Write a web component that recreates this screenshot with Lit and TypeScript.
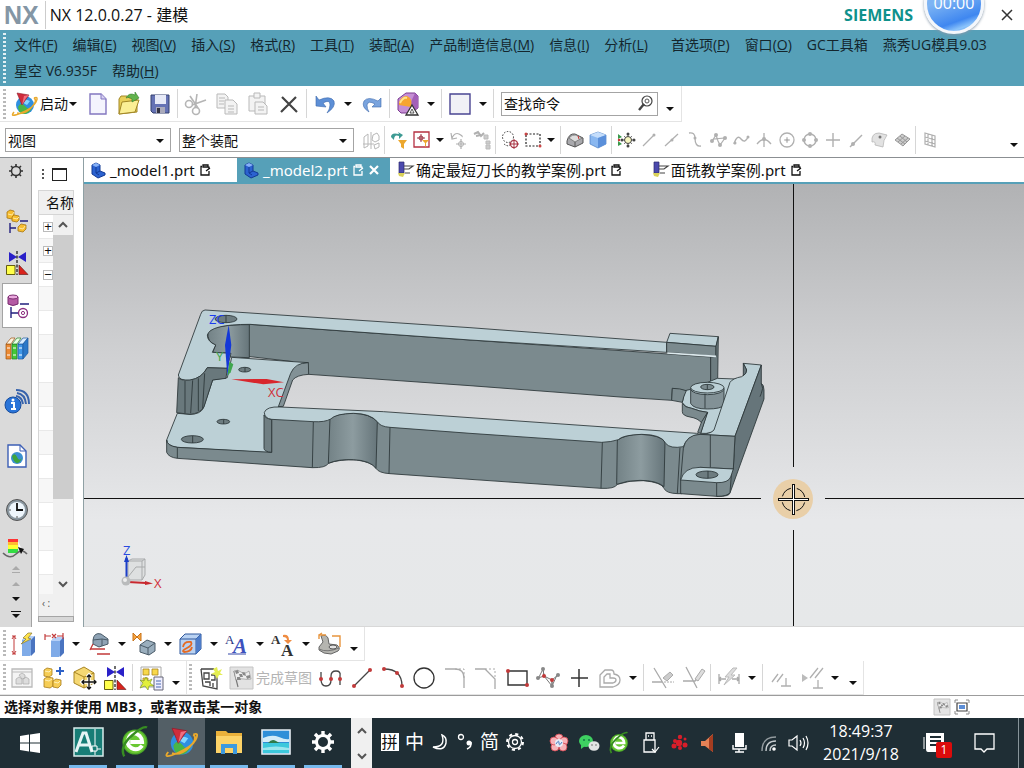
import { LitElement, html, svg, css, TemplateResult, SVGTemplateResult } from "lit";
import { customElement, state } from "lit/decorators.js";
import { classMap } from "lit/directives/class-map.js";

/* Every icon is drawn around (0, 0) in a 24 x 24 box. */
const G = "#b0b0b0";
const dot = (x: number, y: number, c = "#c23a3a", r = 2) => svg`<circle cx=${x} cy=${y} r=${r} fill=${c} />`;
const flash = svg`<path d="M6-11 1-6 4-5-1 0 9-5 6-6 10-11z" fill="#ffe34a" stroke="#8a7a30" stroke-width=".7"/>`;
const blueCube = svg`<path d="M0-4 4-8H13L12-7V8L8 12H0z" fill="#7fabe8"/><path d="M0-4 4-8H13L9-4z" fill="#b5d0f7"/><path d="M9-4 13-8V8L9 12z" fill="#4a74c0"/>`;
const mirror = svg`<path d="M-8-11V-1L0-6zM9-11V-1L1-6z" fill="#2a20c8"/><path d="M0-12V12" stroke="#222" stroke-width="1.3" stroke-dasharray="3 1.5"/><path d="M-10.500 2.500H-2V11.500H-10.500z" fill="#ffff4a" stroke="#665f10"/><path d="M2 2 11 11.500H2z" fill="#d9231c" stroke="#5a1010" stroke-width=".6"/>`;
const globe = svg`<circle cx="0" cy="1" r="9" fill="#2f8fe0"/><path d="M-7 3Q-4-3 0 2T7 4Q4 10-1 10T-7 3z" fill="#48b548"/><path d="M-5-3Q0-6 5-3L2 1Q-2-1-5-3z" fill="#83d6ff"/><path d="M-8-11 4-9-3 1z" fill="#cf2c3c" stroke="#901c2c" stroke-width=".6"/><path d="M4-9 1-6-3 1-1-8z" fill="#f07080"/><path d="M9-6Q13-3 6 4T-8 9M9-6Q14-8 11-2T-4 9-11 8" fill="none" stroke="#e9a92c" stroke-width="1.500"/>`;
const flag = svg`<path d="M-7-7-3 9" stroke="#777" stroke-width="1.2"/><path d="M-7-7Q-3-9 0-6T8-7L10 1Q6 2 3 1T-5 2z" fill="#eee" stroke="#888" stroke-width=".6"/><path d="M-6-7-3-8-2-5-5-4zM1-6 4-5.500 5-2 2-3zM-2-4 1-4 2-1-1-1zM5-2 9-3 9 0 6 1zM-4-1-1-1 0 2-4 2z" fill="#888"/>`;
const page = svg`<path d="M-8-10H3L8-5V10H-8z" fill="#f4f4fd" stroke="#8377c0" stroke-width="1.4"/><path d="M3-10V-5H8" fill="#d8d2f2" stroke="#8377c0"/>`;
const twoLines = svg`<path d="M-9 4-3-4M-4 4 2-4" stroke=${G} stroke-width="1.3"/>`;
const ball = svg`<circle r="10.500" fill="#4aa52a"/><circle r="9.500" fill="#69c832"/><path d="M6 3Q2 8-3 5T-5-4 4-5Q6-3 6 0H-4" fill="none" stroke="#fff" stroke-width="3.200"/><path d="M-9 12Q-13 4-3-5T10-12" fill="none" stroke="#378d22" stroke-width="2"/>`;

const icons: Record<string, SVGTemplateResult> = {
  globe,
  page,
  open: svg`<path d="M-10-5-8-8H-2L0-6H8V8L-10 10z" fill="#e8cf58" stroke="#a28726"/><path d="M-7-2 10-4 6 8-10 10z" fill="#fbef95" stroke="#a28726"/><path d="M-3-6Q0-12 6-9V-12L10-6 3-2V-5Q0-8-3-6z" fill="#62b34c" stroke="#34802c" stroke-width=".6"/>`,
  save: svg`<path d="M-9-9H9V9H-7L-9 7z" fill="#6572b4" stroke="#35406e"/><path d="M-5-9H6V0H-5z" fill="#e7eaf7"/><path d="M-4 3H5V9H-4z" fill="#aab"/><path d="M-3 4H0V9H-3z" fill="#334"/>`,
  cut: svg`<g fill="none" stroke="#b5b5b5" stroke-width="1.600"><circle cx="-7" cy="0" r="3.500"/><circle cx="0" cy="7" r="3.500"/><path d="M-4 1 10-4M-1 4 1-10M2 4-6-8"/></g>`,
  copy: svg`<g fill="#f3f3f3" stroke="#b9b9b9"><path d="M-10-10H-2L1-7V4H-10z"/><path d="M-2-4H6L10 0V10H-2z"/><path d="M-8-6H-2M-8-3H-3M-8 0H-3M1 2H7M1 5H7M1 8H7"/></g>`,
  paste: svg`<g fill="#f3f3f3" stroke="#b9b9b9"><path d="M-9-8H7V7H-9z"/><path d="M-4-11H2V-6H-4z"/><path d="M-3-2H5L9 2V10H-3z"/><path d="M0 3H6M0 6H6"/></g>`,
  del: svg`<path d="M-7-7 8 8M7-7-8 8" stroke="#444" stroke-width="2.200"/>`,
  undo: svg`<path d="M-9-8-9 2 1 3-2-1Q5-5 5 1 5 5 2 9 11 3 9-3 5-9-6-4z" fill="#5d8fd6" stroke="#3e69ad" stroke-width=".6"/>`,
  redo: svg`<path d="M9-6V3L0 3 3 0Q-4-4-5 1-5 5-3 8-11 3-8-3-4-8 6-3z" fill="#7aa4de" stroke="#3e69ad" stroke-width=".6"/>`,
  cubes: svg`<path d="M-10-5-2-11H7L10-8V4L3 9H-7L-10 6z" fill="#c58fd4" stroke="#7b3b90"/><path d="M7-11 10-8V4L3 9V-2z" fill="#a35fb8"/><path d="M-9-2Q-6-9-1-8 5-6 3 3L-9 1z" fill="#f6a531"/><path d="M-8-1Q-5-7-1-6" stroke="#ffe28a" stroke-width="2" fill="none"/><path d="M4 1 10 11H-2z" fill="#fff" stroke="#333" stroke-width="1.300"/><path d="M4 5 6 9H2z" fill="none" stroke="#333" stroke-width=".8"/>`,
  square: svg`<path d="M-10-10H10V10H-10z" fill="#f1f1f6" stroke="#4a4592" stroke-width="1.400"/>`,
  lens: svg`<circle cx="2" cy="-3" r="5" fill="#fff" stroke="#444" stroke-width="1.200"/><circle cx="2" cy="-3" r="2" fill="none" stroke="#555"/><path d="M-1 0-6 6" stroke="#444" stroke-width="2.400"/>`,
  asm: svg`<g fill="none" stroke="#b8b8b8"><path d="M-7-3-3-6V6L-7 8zM0-8V9M-8 4H3M2-5 6-7 8-4V0L4 2 1 0zM3 5 8 3V7L4 9z"/></g>`,
  filterBack: svg`<path d="M-8-3Q-8-8 0-6L-1-8 4-5 0-1V-4Q-5-6-5 0z" fill="#3d9a93"/><path d="M-1 0H8L5 4V9L2 7V4z" fill="#eca72d"/>`,
  filterBox: svg`<path d="M-8-8H7V7H-8z" fill="#fff" stroke="#b53042" stroke-width="1.300"/><path d="M-1-6V2M-5-2H3" stroke="#9c3345"/><circle cx="-1" cy="-2" r="2" fill="none" stroke="#9c3345"/><path d="M0 0H7L4 3V7L3 6V3z" fill="#eca72d"/>`,
  gUndo: svg`<path d="M-8-7-7-1-2-2M-7-2Q-4-8 0-6T3-3M2-1V9M-3 4H7" fill="none" stroke=${G} stroke-width="1.200"/><circle cx="2" cy="4" r="2.500" fill="none" stroke=${G}/>`,
  gTree: svg`<path d="M-8-6-4-8-1-4 2-7M-6-4-1-5" fill="none" stroke=${G} stroke-width="2"/><path d="M2-5H6V-1H2zM4 1H8V4H4zM4 5H8V9H4z" fill="#ccc" stroke="#bbb"/>`,
  dashedSel: svg`<circle cx="-2" cy="-3" r="5.500" fill="none" stroke="#333" stroke-dasharray="1.500 1.500"/><path d="M-6 4Q-1 8 2 3" fill="none" stroke="#333" stroke-dasharray="1.500 1.500"/><circle cx="4" cy="4" r="3.500" fill="#fff" stroke="#a73342" stroke-width="1.200"/><path d="M4-1V9M-1 4H9" stroke="#a73342"/>`,
  dashedBox: svg`<path d="M-7-6H7V6H-7z" fill="none" stroke="#222" stroke-width="1.200" stroke-dasharray="2 1.500"/>${dot(-7, -6, "#c44", 1.5)}${dot(7, 6, "#c44", 1.5)}`,
  greyCube: svg`<path d="M-8 1Q-6-7 0-6L8-2V3L0 7-8 4z" fill="#a9a9ad" stroke="#555"/><path d="M-6-2Q-3-6 1-5L7-2 0 2z" fill="#ddd" stroke="#666" stroke-width=".7"/><path d="M0 2V7" stroke="#555"/><path d="M3-4 4-1" stroke="#c33"/>`,
  cube: svg`<path d="M-8-5 0-8 8-5V4L0 8-8 4z" fill="#89b7f0" stroke="#4a7cc0" stroke-width=".7"/><path d="M-8-5 0-8 8-5 0-2z" fill="#c4ddfb"/><path d="M0-2 8-5V4L0 8z" fill="#5a8fda"/>`,
  scatter: svg`<path d="M-8-6-4-3-8-1zM-8 1-4 4-8 6z" fill="#3a9a4c"/><path d="M2-7V7M-5 0H9M-2-4 6 4M6-4-2 4" stroke="#555" stroke-width=".8"/><circle cx="2" cy="0" r="3.500" fill="#f6f6c0" stroke="#444"/>${dot(-7, 0, "#c33", 1.2)}${dot(2, -6, "#444", 1.5)}${dot(2, 6, "#444", 1.5)}${dot(8, 0, "#444", 1.5)}${dot(-4, 0, "#444", 1.5)}`,
  line1: svg`<path d="M-6 6 5-5" stroke=${G} stroke-width="1.300"/>${dot(5, -5, G, 1.5)}`,
  line2: svg`<path d="M-7 6 6-6" stroke=${G} stroke-width="1.300"/>${dot(0, 0, G, 1.5)}`,
  curveS: svg`<path d="M-6-7Q0-8 0-2 0 7 6 6" fill="none" stroke=${G} stroke-width="1.300"/>${dot(0, -2, G, 1.5)}`,
  poly: svg`<path d="M-7 1-4-1M-6 1-2-5 0 1 2 5 7-2-4-1" fill="none" stroke=${G} stroke-width="1.200"/>${dot(-6, 1, G)}${dot(-2, -5, G)}${dot(2, 5, G)}${dot(7, -2, G)}`,
  wave: svg`<path d="M-7 4Q-4-6 0-1T7-3" fill="none" stroke=${G} stroke-width="1.400"/>${dot(-6, 3, G, 1.5)}${dot(7, -3, G, 1.5)}`,
  arcPlus: svg`<path d="M-7 4Q0-5 7 4M0-7V7" fill="none" stroke=${G} stroke-width="1.300"/>${dot(0, -1, G)}`,
  target: svg`<circle r="7" fill="none" stroke=${G} stroke-width="1.300"/><path d="M-3 0H3M0-3V3" stroke=${G}/>${dot(0, 0, G, 1.5)}`,
  ring: svg`<circle r="6" fill="none" stroke=${G} stroke-width="1.400"/>${dot(0, -6, G)}${dot(0, 6, G)}${dot(-6, 0, G)}${dot(6, 0, G)}`,
  plusG: svg`<path d="M-7 0H7M0-7V7" stroke=${G} stroke-width="1.400"/>`,
  line3: svg`<path d="M-6 7 6-5" stroke=${G} stroke-width="1.400"/>${dot(-3, 4, G)}`,
  face: svg`<path d="M-7 2Q-8-7 0-7L8-5Q4 0 4 7L-4 5Q-3 1-7 2z" fill="#e2e2e2" stroke="#b5b5b5" stroke-width=".8"/>${dot(1, -3, "#777", 1.5)}`,
  mesh: svg`<path d="M-7 0 0-6 8-1 1 6z" fill="#ccc" stroke="#999"/><path d="M-5-2 3 4M-2-4 5 2M-4 2 3-4M-1 4 6-2" stroke="#999"/>`,
  gridG: svg`<path d="M-5-7 5-4V7L-5 4zM-5-3 5 0M-5 1 5 4M-2-6V5M2-5V6" fill="none" stroke=${G} stroke-width="1.200"/>`,
  /* resource bar */
  gear: svg`<circle r="4.500" fill="none" stroke="#333" stroke-width="1.500"/><path d="M0-7V-4M0 4V7M-7 0H-4M4 0H7M-5-5-3-3M5-5 3-3M-5 5-3 3M5 5 3 3" stroke="#333" stroke-width="1.600"/>`,
  nav: svg`<g fill="#f7bd2f" stroke="#a87713" stroke-width=".8"><path d="M-10-10-7-12-3-11V-6L-5-3-10-4z"/><path d="M-5-5-3-7 2-6V-2L0 0-5-1z"/><path d="M1 5 4 2 9 3V7L6 10 1 9z"/></g><path d="M-9-8-5-7-3-10M-4-4 0-3 2-5M2 6 6 7 8 4" fill="none" stroke="#ffe9a0"/><path d="M3-1H11M-7 1V11M-7 6H-1" stroke="#22207e" stroke-width="1.400"/>`,
  mirror,
  feature: svg`<path d="M-10-9H0V-2Q-5 1-10-2z" fill="#b45aa4" stroke="#7a2d70"/><ellipse cx="-5" cy="-9" rx="5" ry="2" fill="#eaa9de" stroke="#7a2d70"/><path d="M2-2H11M-7 1V12M-7 7H0" stroke="#22207e" stroke-width="1.400"/><circle cx="5" cy="7" r="4.500" fill="#fff" stroke="#8c2f80" stroke-width="1.300"/><circle cx="5" cy="7" r="1.600" fill="none" stroke="#8c2f80"/>`,
  books: svg`<g stroke-width=".7"><path d="M-11-5H-6V10H-11z" fill="#ec8a34" stroke="#9c5312"/><path d="M-11-5-6-11H-2L-6-5z" fill="#fff3df" stroke="#9c5312"/><path d="M-5-5H0V10H-5z" fill="#44c838" stroke="#24802a"/><path d="M-5-5 0-11H4L0-5z" fill="#e9ffe4" stroke="#24802a"/><path d="M1-5H6V10H1z" fill="#3f97e8" stroke="#1c5aa0"/><path d="M1-5 6-11H11L6-5z" fill="#d8ecff" stroke="#1c5aa0"/><path d="M6-5 11-11V4L6 10z" fill="#2b78c8" stroke="#1c5aa0"/></g><path d="M-10-1H-7M-4-1H-1M2-1H5M2 6H5M-10 6H-7M-4 6H-1" stroke="#fff" stroke-width="1.200"/>`,
  info: svg`<g fill="none" stroke="#3763ac" stroke-width="2"><path d="M-1-6Q5-5 6 2M0-9Q8-8 9 2M-1-12Q12-12 12 2" /></g><circle cx="-4" cy="3" r="8" fill="#2a74d8" stroke="#174c9c"/><path d="M-6 1H-3V7M-6 7H-1" stroke="#fff" stroke-width="2" fill="none"/>${dot(-4, -2, "#fff", 1.5)}`,
  web: svg`<path d="M-9-11H3L9-5V11H-9z" fill="#fff" stroke="#3d5fb5" stroke-width="1.400"/><path d="M3-11V-5H9" fill="none" stroke="#3d5fb5"/><circle cx="0" cy="2" r="6" fill="#3a8fd0"/><path d="M-5 0Q-2-4 0 1T5 2Q3 7 0 7T-5 0z" fill="#3da53d"/>`,
  clock: svg`<circle r="10.500" fill="#8a97a0" stroke="#555"/><circle r="8" fill="#eef6fc"/><path d="M0-7V0H6" stroke="#111" stroke-width="1.800" fill="none"/><path d="M0 6V8M-8 0H-6" stroke="#555"/>`,
  rainbow: svg`<path d="M-9-10H1V-7H-9z" fill="#f33"/><path d="M-9-7H1V-4H-9z" fill="#fb3"/><path d="M-9-4H1V0H-9z" fill="#ff3"/><path d="M-9 0H1V4H-9z" fill="#3d4"/><path d="M-14 4Q-7 11-1 5T10 5" fill="none" stroke="#666" stroke-width="1.600"/><path d="M1-8 6 3 2 1z" fill="#fff"/><path d="M1-2 7 0 4 5z" fill="#111"/>`,
  /* feature tools */
  f1: svg`${blueCube}${flash}<path d="M-8-8V10M-10-8H-6M-10 10H-6M-10-5-8-8-6-5M-10 7-8 10-6 7" stroke="#c23a3a" fill="none"/>`,
  f2: svg`<g transform="translate(-2 1)">${blueCube}<path d="M-6-11V-5M12-12V-6M-6-9H0M6-9H12M1-11 5-7M5-11 1-7" stroke="#c23a3a" stroke-width="1.200"/></g>`,
  f3: svg`<path d="M-6-4Q-5-12 2-10L9-5V0L0 3-6 0z" fill="#8fa3b5" stroke="#4a5b68"/><path d="M-6-4 3-5 9-4M3-5V2" stroke="#4a5b68" fill="none"/><path d="M-6 0-9 6M-9 5H6M-2 10H11" stroke="#c23a3a" stroke-width="1.300"/>`,
  f4: svg`<path d="M-12-11V-3L-4-11V-3z" fill="#f6a543" stroke="#c87218"/><path d="M-5 1 2-4 10-1V7L4 11-5 8z" fill="#9aaebd" stroke="#4a5b68"/><path d="M-5 1 3 4 10-1M3 4V11" fill="none" stroke="#4a5b68"/>`,
  f5: svg`<path d="M-11-5-6-10H10V5L5 10H-11z" fill="#b9d2f2" stroke="#31589c"/><path d="M-11-5H5L10-10M5-5V10" fill="none" stroke="#31589c"/><path d="M5-5 10-10V5L5 10z" fill="#4d7cc8"/><path d="M-8 3Q-7-3 0-2 2 1-4 4T-7 8Q0 8 1 3" fill="none" stroke="#e56a22" stroke-width="1.800"/>`,
  f6: svg`<path d="M-9 10H9" stroke="#3346a8"/><text class="serif" x="-12" y="0" font-size="13" fill="#24307e">A</text><text class="serif it" x="-4" y="9" font-size="21" font-weight="700" fill="#3c51bd">A</text>`,
  f7: svg`<text class="serif" x="-12" y="0" font-size="13" font-weight="700" fill="#333">A</text><text class="serif" x="-2" y="12" font-size="17" font-weight="700" fill="#333">A</text><path d="M0-9Q6-10 6-4H9L5 0 1-4H4Q4-7 0-7z" fill="#ef8c42"/>`,
  f8: svg`<path d="M-10 3-6-2-8-8Q-3-10-1-6L0 0 8 1Q12 4 9 7L2 10Q-6 10-10 6z" fill="#b5b5b0" stroke="#666"/><path d="M-10 5Q-2 9 10 4" fill="none" stroke="#777"/><ellipse cx="4" cy="3" rx="4" ry="2" fill="#e4e4e4" stroke="#555"/><path d="M-10-5V-9H-3M3-8H11V3M-10-9-7-11" stroke="#e8953e" fill="none" stroke-width="1.400"/>`,
  g1: svg`<path d="M-10-9H10V9H-10z" fill="#f4f4f4" stroke="#bbb" stroke-width="1.300"/><path d="M-10-6H10" stroke="#bbb"/><path d="M-6 1-3-1 0 1V6H-6zM1 1 4-1 7 1V6H1zM-3-3 0-5 3-3V0L0 1z" fill="#ddd" stroke="#aaa" stroke-width=".7"/>`,
  g2: svg`<path d="M7-11V-3M3-7H11" stroke="#2e62c8" stroke-width="2"/><g fill="#f6cd55" stroke="#a87c1a" stroke-width=".8"><path d="M-9-8-6-10-1-9V-3L-4-1-9-2z"/><path d="M-9 1-6-1 0 0V8L-3 10-9 9z"/><path d="M0 3 3 1 8 2V7L5 10 0 9z"/></g><path d="M-8-7-4-6-2-8M-8 2-4 3-1 1M1 4 5 5 7 3" stroke="#fff0b8" fill="none"/>`,
  g3: svg`<path d="M-10-6 0-11 10-5V5L0 10-10 5z" fill="#f5d873" stroke="#a88522"/><path d="M-10-6 0-1 10-5M0-1V10" stroke="#a88522" fill="none"/><path d="M5-3V11M-2 4H12M3-1 5-3 7-1M3 9 5 11 7 9M0 2-2 4 0 6M10 2 12 4 10 6" stroke="#fff" stroke-width="3.500" fill="none"/><path d="M5-3V11M-2 4H12M3-1 5-3 7-1M3 9 5 11 7 9M0 2-2 4 0 6M10 2 12 4 10 6" stroke="#111" stroke-width="1.300" fill="none"/>`,
  g5: svg`<path d="M-10-11H10V9H-10z" fill="#fff" stroke="#aaa"/><path d="M-8-9H-2V-3H-8zM1-9H7V-3H1zM-8 0H-3V5H-8z" fill="#f8d84a" stroke="#a88522" stroke-width=".8"/><path d="M-5-1-3 3 1 1-1 5 3 8-2 8-3 12-6 8-11 10-8 5-11 2-7 3z" fill="#e2ef3a" stroke="#6d8a20" stroke-width=".6"/><path d="M3-1H12V12H3z" fill="#eef" stroke="#667"/><path d="M5 3H10M5 6H10M5 9H10" stroke="#4a68b0"/>`,
  sketch: svg`<path d="M-9-9H4M-9-9-7 8 7 11V-1M-6-5H-1V1H-6zM1-3H5V2H1M-5 4H0V8M3 5V9" fill="none" stroke="#444" stroke-width="1.300"/><path d="M7-11 8-7 12-9 10-5 13-3 9-3 7 1 5-3 1-4 5-6 3-9z" fill="#e4ee52"/>`,
  finish: svg`<path d="M-11-11H12V11H-11z" fill="#e2e2e2" stroke="#c4c4c4"/>${flag}`,
  profile: svg`<path d="M-10-6V1Q-10 8-5 8T0 2V-2Q0-7 5-7T9-2V7" fill="none" stroke="#444" stroke-width="1.300"/>${dot(-10, 1)}${dot(0, 1)}${dot(9, 1)}`,
  segment: svg`<path d="M-8 8 8-8" stroke="#444" stroke-width="1.300"/>${dot(-8, 8)}${dot(8, -8)}`,
  arc: svg`<path d="M-9-9Q9-9 9 8" fill="none" stroke="#444" stroke-width="1.300"/>${dot(-9, -9)}${dot(4, -5)}${dot(9, 8)}`,
  circle: svg`<circle r="10" fill="none" stroke="#333" stroke-width="1.300"/>`,
  fillet: svg`<path d="M-10-9H0Q9-9 9 0V10" fill="none" stroke="#aaa" stroke-width="1.300"/><path d="M0-9H9V0" fill="none" stroke="#aaa" stroke-dasharray="2"/>`,
  chamfer: svg`<path d="M-11-9H-1L9 1V11" fill="none" stroke="#aaa" stroke-width="1.300"/><path d="M-1-9H9V1" fill="none" stroke="#aaa" stroke-dasharray="2"/>`,
  rect: svg`<path d="M-9-7H10V7H-9z" fill="none" stroke="#333" stroke-width="1.400"/>${dot(-9, -7)}${dot(10, 7)}`,
  spline: svg`<path d="M-10 0-4-2-5-9-4-2 4 2 4 8 4 2 10-3M-9-1-5-9M-4-2 4 8M4 8 9-3" fill="none" stroke="#777"/>${dot(-10, 0, "#888")}${dot(-5, -9, "#888")}${dot(4, 8, "#888")}${dot(10, -3, "#888")}${dot(-4, -2)}${dot(4, 2)}`,
  plus: svg`<path d="M-8 0H9M0-9V9" stroke="#333" stroke-width="1.500"/>`,
  offset: svg`<g fill="none" stroke="#aaa" stroke-width="1.300"><path d="M-10 9V-3L-5-8H1Q4-8 4-4 10-3 10 2T3 9z"/><path d="M-6 5V-1L-3-4H0V0H3Q6 0 6 2T3 5z"/></g>`,
  trim: svg`<path d="M-8-10 4 10M-10 4H0" stroke="#aaa" stroke-width="1.300"/><path d="M2 4H12" stroke="#aaa" stroke-dasharray="2 1"/><path d="M1 0 8-6 11-3 5 3z" fill="#ccc" stroke="#aaa"/>`,
  extend: svg`<path d="M-7-11 4 10M-10 3H2L6-1" fill="none" stroke="#aaa" stroke-width="1.300"/><path d="M2 1 9-9 12-7 5 3z" fill="#ddd" stroke="#aaa"/>`,
  dim: svg`<path d="M-10-4V6M10-4V6M-10 1H-3M3 1H10M-8-1-10 1-8 3M8-1 10 1 8 3" fill="none" stroke="#aaa" stroke-width="1.300"/><path d="M4-10-4-1H0L-5 7 6-3H2L8-10z" fill="#ddd" stroke="#bbb"/>`,
  para: svg`${twoLines}<path d="M0 8H10M5 0V8" stroke=${G} stroke-width="1.300"/>`,
  paraShow: svg`<path d="M-10-4-4 0-10 4z" fill="#bbb"/><path d="M-2 0 6-10M3 0 11-10M1 10H11M6 2V10" stroke=${G} stroke-width="1.300"/>`,
  flagBox: svg`<path d="M-8-8H8V8H-8z" fill="#e4e4e4" stroke="#c4c4c4"/><g transform="scale(.65)">${flag}</g>`,
  screen: svg`<path d="M-7-4V-7H-4M4-7H7V-4M7 4V7H4M-4 7H-7V4" stroke="#888" fill="none"/><path d="M-5-4H5V4H-5z" fill="#fff" stroke="#444" stroke-width="1.200"/><path d="M-3-2H3V2H-3z" fill="#5b8dd6"/>`,
  /* document tabs */
  part: svg`<path d="M-6-5-2-7 2-5V1L7 3V5L0 8-6 4z" fill="#2b62d0" stroke="#123a94"/><path d="M-6-5-2-7 2-5-2-3z" fill="#86b1f7"/><path d="M-2-3V3L1 5M2 1-2 3" stroke="#123a94" fill="none"/>`,
  drill: svg`<path d="M-5-8H0V3H-5z" fill="#4b49ad" stroke="#2b2a6e" stroke-width=".7"/><path d="M-6 3H1L-1 7-5 6z" fill="#d8d05a"/><path d="M0-4H9L5-1H0M1 3H6" stroke="#444" stroke-width="1.200" fill="none"/>`,
  mark: svg`<path d="M-2-5V-3H3V-5zM-3-3.500H-4V5H4V1M4-3.500V-1M1 1 5-2" fill="none" stroke="currentColor" stroke-width="1.300"/>`,
  close: svg`<path d="M-3-4 5 4M5-4-3 4" stroke="currentColor" stroke-width="2.200"/>`,
  winClose: svg`<path d="M-5-5 5 5M5-5-5 5" stroke="#333" stroke-width="1.500"/>`,
  /* taskbar */
  windows: svg`<path d="M-10-7-1-8.500V-.500H-10zM0-8.600 10-10V-.500H0zM-10 .500H-1V8.500L-10 7zM0 .500H10V10L0 8.600z" fill="#fff"/>`,
  cad: svg`<path d="M-14-14H15V14H-14z" fill="#177d76" stroke="#d9ecec" stroke-width="1.500"/><path d="M-12 10-5-9H-2L4 10M-9 3H3" stroke="#e5f4f4" stroke-width="3" fill="none"/><path d="M7-13V4M4 4H9V9H4zM9 7H13M7 9V13" stroke="#fff" fill="none"/>`,
  bigBall: svg`<g transform="scale(1.200)">${ball}</g>`,
  smallBall: svg`<g transform="scale(.850)">${ball}</g>`,
  nx: svg`<g transform="scale(1.250)">${globe}</g>`,
  folder: svg`<path d="M-13-11H-3L-1-9H13V11H-13z" fill="#eab13b"/><path d="M-13-6H13V11H-13z" fill="#fcd368"/><path d="M-8 12V2H8V12H4V6H-4V12z" fill="#3c9ae0"/>`,
  picture: svg`<path d="M-14-12H14V12H-14z" fill="#2f8fd8" stroke="#e6eef4" stroke-width="1.600"/><path d="M-13-4Q-4-8 3-5T13-3V0H-13z" fill="#d3ecf8"/><path d="M-8 1Q-4-4 0-1T8 1z" fill="#2f7a4a"/><path d="M-13 1H13V11H-13z" fill="#3cc8dc"/><path d="M-13 6Q0 3 13 6V8H-13z" fill="#9be6ee"/>`,
  settings: svg`<circle r="6.500" fill="none" stroke="#fff" stroke-width="3"/><path d="M0-11V-7M0 7V11M-11 0H-7M7 0H11M-8-8-5-5M8-8 5-5M-8 8-5 5M8 8 5 5" stroke="#fff" stroke-width="3.400"/>`,
  moon: svg`<path d="M2-7Q6 5-7 5 4 10 6 1 7-5 2-7z" fill="none" stroke="#fff" stroke-width="1.400"/>`,
  punct: svg`<circle cx="-4" cy="-5" r="2.500" fill="none" stroke="#fff" stroke-width="1.300"/><circle cx="4" cy="1" r="2.500" fill="#fff"/><path d="M6 0Q7 5 2 7" stroke="#fff" stroke-width="1.500" fill="none"/>`,
  imeGear: svg`<circle r="6.500" fill="none" stroke="#fff" stroke-width="1.300"/><circle r="2.500" fill="none" stroke="#fff" stroke-width="1.300"/><circle r="8" fill="none" stroke="#fff" stroke-width="2" stroke-dasharray="3.140 3.140"/>`,
  flower: svg`<g fill="#f6b3b8" stroke="#d4434e" stroke-width=".8"><circle cx="0" cy="-5" r="4"/><circle cx="5" cy="-2" r="4"/><circle cx="4" cy="4" r="4"/><circle cx="-4" cy="4" r="4"/><circle cx="-5" cy="-2" r="4"/></g><circle r="4" fill="#e9edf6"/><path d="M-3 1Q0-4 0 0T3-1" stroke="#4a7cc0" fill="none"/>`,
  wechat: svg`<ellipse cx="-3" cy="-2" rx="7" ry="6" fill="#3ed061"/><path d="M-8 2-8 6-4 3z" fill="#3ed061"/><ellipse cx="5" cy="3" rx="5.500" ry="4.800" fill="#e2e4e4"/>${dot(-5, -3, "#174", 1)}${dot(0, -3, "#174", 1)}${dot(3, 2, "#666", 0.8)}${dot(7, 2, "#666", 0.8)}`,
  usb: svg`<path d="M-3-3V-10H5V-3M-5-3H6V9H-5z" fill="none" stroke="#fff" stroke-width="1.300"/><path d="M-1-7H0M2-7H3" stroke="#fff" stroke-width="1.500"/><path d="M3 6 6 9 10 4" fill="none" stroke="#fff" stroke-width="1.200"/>`,
  redDots: svg`${dot(0, 0, "#d81e2a", 3.2)}${dot(-5, 3, "#d81e2a", 2.5)}${dot(6, 2, "#d81e2a", 2.5)}${dot(1, -6, "#d81e2a", 2.2)}${dot(-4, -2, "#d81e2a", 2)}${dot(1, 5, "#d81e2a", 2)}${dot(6, -4, "#d81e2a", 1.5)}`,
  orange: svg`<path d="M-8-2H-4L4-9V9L-4 3H-8z" fill="#e58256"/><path d="M0-5 4-9V9L0 6z" fill="#a53d20"/>`,
  mic: svg`<path d="M-4-10H5V4H-4z" fill="#fff"/><path d="M-6 2V6H7V2M0 6V9M-4 9H5" fill="none" stroke="#fff" stroke-width="1.400"/>`,
  wifi: svg`<g fill="none" stroke="#c6cccf" stroke-width="1.400"><path d="M-7 8Q-7-6 7-6" opacity=".7"/><path d="M-3 8Q-3-2 7-2"/><path d="M1 8Q1 2 7 2"/></g>${dot(5, 6, "#fff", 1.8)}`,
  volume: svg`<path d="M-10-3H-7L-2-7V7L-7 3H-10z" fill="none" stroke="#fff" stroke-width="1.200"/><path d="M1-3Q3 0 1 3M4-5Q7 0 4 5M7-7Q11 0 7 7" fill="none" stroke="#fff" stroke-width="1.200"/>`,
  news: svg`<path d="M-9-10H9V9H-7Q-9 9-9 6z" fill="#fff"/><path d="M-11-6V6" stroke="#fff"/><path d="M-5-6H6M-5-2H6M-5 2H1" stroke="#1f2e35" stroke-width="2"/>`,
  notice: svg`<path d="M-9-9H10V6H3L0 9-3 6H-9z" fill="none" stroke="#fff" stroke-width="1.300"/>`,
  caret: svg`<path d="M-4-2H4L0 2z" fill="#111"/>`,
  up: svg`<path d="M-4 2 0-2 4 2" fill="none" stroke="#555" stroke-width="2"/>`,
  down: svg`<path d="M-4-2 0 2 4-2" fill="none" stroke="#555" stroke-width="2"/>`,
  topEnd: svg`<path d="M-4 1H4L0-3zM-4 3H4V4H-4z" fill="#aaa"/>`,
  prev: svg`<path d="M-4 2H4L0-2z" fill="#aaa"/>`,
  bottomEnd: svg`<path d="M-4 0H4L0 4zM-5-3H5V-2H-5z" fill="#111"/>`,
};

const icon = (name: string) =>
  html`<svg class="icon" viewBox="-12 -12 24 24" aria-hidden="true">${icons[name]}</svg>`;

/* "|" is a separator, "v" a drop-down arrow, "_" the arrow at the end of a bar. */
const standardA = ["page", "open", "save", "|", "cut", "copy", "paste", "del", "|", "undo", "v", "redo", "|", "cubes", "v", "|", "square", "v", "|"];
const selection = ["asm", "|", "filterBack", "filterBox", "v", "gUndo", "gTree", "|", "dashedSel", "dashedBox", "v", "|", "greyCube", "cube", "|", "scatter", "line1", "line2", "curveS", "poly", "wave", "arcPlus", "target", "ring", "plusG", "line3", "face", "mesh", "|", "gridG"];
const features = ["f1", "f2", "v", "f3", "v", "f4", "v", "f5", "v", "f6", "v", "f7", "v", "f8", "_"];
const assembly = ["g1", "g2", "g3", "mirror", "|", "g5", "_"];
const sketchTools = ["profile", "segment", "arc", "circle", "fillet", "chamfer", "rect", "spline", "plus", "offset", "v", "|", "trim", "extend", "|", "dim", "v", "|", "para", "paraShow", "v", "_"];

const tools = (names: string[]) =>
  names.map((n) =>
    n === "|"
      ? html`<span class="sep"></span>`
      : n === "v" || n === "_"
        ? html`<button class=${classMap({ drop: true, low: n === "_" })} aria-label="更多">${icon("caret")}</button>`
        : html`<button class="tool" aria-label=${n}>${icon(n)}</button>`
  );

const menus: [string, string][] = [
  ["文件", "F"], ["编辑", "E"], ["视图", "V"], ["插入", "S"], ["格式", "R"], ["工具", "T"], ["装配", "A"],
  ["产品制造信息", "M"], ["信息", "I"], ["分析", "L"], ["首选项", "P"], ["窗口", "O"], ["GC工具箱", ""],
  ["燕秀UG模具9.03", ""], ["星空 V6.935F", ""], ["帮助", "H"],
];

const shared = css`
  * { box-sizing: border-box; }
  button, select, input { font: inherit; color: inherit; border: 0; background: none; padding: 0; margin: 0; border-radius: 0; }
  button { display: flex; align-items: center; justify-content: center; flex: none; }
  .icon { width: 24px; height: 24px; flex: none; display: block; overflow: visible; }
  .serif { font-family: "Liberation Serif", serif; }
  .it { font-style: italic; }
`;

@customElement("model-view")
class ModelView extends LitElement {
  static styles = css`
    :host { display: block; flex: 1; min-height: 0; overflow: hidden; background: linear-gradient(#b1b2b4, #cfd0d2 38%, #e3e4e6 70%, #e7e8ea 76%, #e6e8e9); }
    svg { display: block; width: 100%; height: 100%; }
    .label { font: 13px "Open Sans", sans-serif; }
  `;

  render(): TemplateResult {
    return html`<svg viewBox="84 184 940 443" preserveAspectRatio="xMinYMin slice" role="img" aria-label="三维模型">
      <defs>
        <linearGradient id="bend"><stop offset="0" stop-color="#738286"/><stop offset=".5" stop-color="#8d9ca0"/><stop offset="1" stop-color="#66757a"/></linearGradient>
      </defs>
      <path d="M793.5 184V467M793.5 530V627M84 498.500H761M825 498.500H1024" stroke="#111"/>
      <g transform="translate(150 295) scale(.33333)" stroke="#2c3639" stroke-width="2.600" stroke-linejoin="round" fill="#7b8a8e">
        <path d="M172 120Q172 92 300 88L960 135 1682 186V268L1627 285 1605 287 1567 280 1565 316 1410 306 960 272 476 238 430 200 190 172 197 150Q175 140 172 120z"/>
        <path d="M174 112Q190 88 298 89V188L240 186V174L188 172 197 150Q170 140 174 112z" fill="url(#bend)"/>
        <path d="M165 45Q155 46 152 58L85 240Q86 257 120 256 155 250 172 218L231 220 243 175 187 172 197 150Q172 140 172 120 180 88 300 88L960 135 1550 172V142L960 98z" fill="#bcd0d6"/>
        <path d="M1560 115 1705 125 1698 154 1550 142z" fill="#bcd0d6"/>
        <path d="M1550 142 1698 154V184L1550 172z"/>
        <path d="M1705 125 1703 258 1682 268V186L1698 184V154z" fill="#6d7c80"/>
        <path d="M1552 174 1698 184" stroke="#dce9ed" stroke-width="5"/>
        <path d="M82 355 50 435Q50 452 82 457L342 472H365L387 335 428 240Q440 205 475 203L430 200 245 187 232 248 188 255 160 340Q150 358 120 358z" fill="#bcd0d6"/>
        <path d="M85 248Q92 258 120 255 155 250 172 218L232 220 228 250 188 255 162 335Q150 356 120 358L80 353z" fill="#69787c"/>
        <path d="M105 258V355M128 256 122 355M145 250V348M164 235 158 340" fill="none"/>
        <path d="M475 203 476 238Q440 240 428 255L400 334 385 335 422 235Q435 203 475 203z" fill="#829196"/>
        <path d="M50 435V472Q56 487 82 490L487 518Q528 519 535 505 570 492 620 495 668 502 678 520 686 534 720 536L960 553 1353 580Q1395 582 1402 568 1440 555 1480 557 1535 562 1542 580 1548 595 1583 596L1596 596 1603 440 1350 420 700 360 365 350V472L82 457Q50 452 50 435z"/>
        <path d="M82 457V490" fill="none"/>
        <path d="M342 360V460Q342 470 365 472V373Q345 370 342 360z" fill="#6f7e82"/>
        <path d="M540 370Q560 355 610 355 660 356 682 380L678 520Q660 496 610 494 565 492 535 505z" fill="url(#bend)"/>
        <path d="M1402 435Q1430 418 1470 418 1530 420 1545 440L1542 575Q1520 556 1470 556 1430 556 1400 568z" fill="url(#bend)"/>
        <path d="M343 352Q350 334 390 336L700 350 960 368 1640 415 1650 418Q1612 422 1600 455 1560 462 1547 445 1535 418 1475 418 1418 420 1405 434 1385 441 1355 442L960 415 720 397Q690 395 682 380 660 355 610 355 558 356 542 372 525 382 490 380L365 373Q343 370 343 352z" fill="#bcd0d6"/>
        <path d="M490 380 487 518M720 397 717 536M1357 442 1353 580M1590 458 1582 596" fill="none"/>
        <path d="M1605 287 1622 283 1702 250 1755 252 1790 250 1700 400Q1688 418 1652 415L1672 352Q1650 350 1625 340 1605 338 1597 322z" fill="#bcd0d6"/>
        <path d="M1567 280Q1590 280 1609 287 1600 305 1597 322L1565 316z"/>
        <path d="M1597 325Q1605 338 1625 340 1650 350 1673 352L1655 384Q1645 370 1620 366 1597 362 1597 350z"/>
        <path d="M1655 380 1673 352 1652 415 1643 412z"/>
        <path d="M1622 280V325Q1630 342 1672 342T1722 330V280z" fill="#829196"/>
        <ellipse cx="1672" cy="282" rx="50" ry="17" fill="#a9bcc2"/>
        <ellipse cx="1672" cy="278" rx="50" ry="16" fill="#bcd0d6"/>
        <ellipse cx="1672" cy="276" rx="20" ry="8"/>
        <path d="M1665 296V340M1672 268V284" fill="none"/>
        <path d="M1780 205 1834 210 1755 424 1650 418Q1680 418 1692 405L1740 262Q1748 250 1775 245 1790 238 1790 225z" fill="#bcd0d6"/>
        <path d="M1780 205V242Q1790 235 1790 225z" fill="#66757a"/>
        <path d="M1834 210V265Q1842 270 1842 285V312L1740 594Q1738 605 1700 604L1750 522 1755 424z" fill="#66757a"/>
        <path d="M1834 265Q1842 280 1834 295L1830 305" fill="none"/>
        <path d="M1592 555 1600 460Q1608 420 1650 418L1755 424 1750 522 1650 517z" fill="#7f8e92"/>
        <path d="M1681 420V518" fill="none"/>
        <path d="M1592 553V596L1700 604Q1735 604 1740 592L1744 540z"/>
        <path d="M1592 555Q1602 517 1650 517L1750 522 1742 546Q1735 564 1700 563z" fill="#bcd0d6"/>
        <path d="M1700 563V604" fill="none"/>
        <g fill="#6d7c80">
          <ellipse cx="1671" cy="539" rx="33" ry="11"/><ellipse cx="228" cy="72" rx="33" ry="11"/>
          <ellipse cx="127" cy="433" rx="33" ry="11"/><ellipse cx="284" cy="224" rx="18" ry="7"/><ellipse cx="220" cy="380" rx="19" ry="7"/>
          <path d="M1674 528V550M128 422V444M285 217V231M221 373V387M228 61V83"/>
        </g>
        <g stroke="none">
          <path d="M232 242 238 200 250 208 242 232z" fill="#3fa64e"/>
          <path d="M236 90 244 150 232 242 225 150z" fill="#1438d8"/>
          <path d="M244 253 350 252 402 262 340 268z" fill="#d8262c"/>
        </g>
      </g>
      <text class="label" x="209" y="324" fill="#1c3cf0">ZC</text>
      <text class="label" x="216" y="361" fill="#3fa64e">Y</text>
      <text class="label" x="268" y="397" fill="#d0303a">XC</text>
      <path d="M128 561 132 559H145V575L142 580H128zM128 561H142V580M142 561 145 559M128 577 136 567H145" fill="#d8dadb" fill-opacity=".6" stroke="#a9abac"/>
      <path d="M126.500 580V558" stroke="#1c3fc8" stroke-width="2"/><path d="M126.500 555 129 562H124z" fill="#1c3fc8"/>
      <path d="M128 582 146 583" stroke="#c8282e" stroke-width="2"/><path d="M153 583.500 145 581V585z" fill="#c8282e"/>
      <circle cx="126" cy="581" r="4.500" fill="#b9bbbc"/><circle cx="125" cy="580" r="2" fill="#eee"/>
      <text class="label" x="123" y="555" fill="#2a4be0">Z</text>
      <text class="label" x="154" y="588" fill="#d0303a">X</text>
      <circle cx="793" cy="499" r="20" fill="#e9cfa8"/>
      <circle cx="793.5" cy="499.500" r="11.500" fill="none" stroke="#111" stroke-dasharray="12 6.060" stroke-dashoffset="-3"/>
      <path d="M793.5 484V515M778 499.500H809" stroke="#111" stroke-width="3"/><path d="M793.5 485V514M779 499.500H808" stroke="#fff"/>
    </svg>`;
  }
}

@customElement("app-root")
export class AppRoot extends LitElement {
  @state() private view = "视图";

  static styles = [shared, css`
    :host { display: flex; flex-direction: column; height: 100vh; overflow: hidden; background: #fff; color: #111; font: 14px/20px "Open Sans", "Noto Sans CJK SC", sans-serif; position: relative; }
    .title { height: 30px; flex: none; display: flex; align-items: center; padding: 0 5px 0 4px; }
    .logo { font: 700 25px/28px "Liberation Sans", sans-serif; color: #8496a5; padding-right: 6px; border-right: 1px solid #ccc; }
    .title h1 { font-size: 16px; font-weight: 400; margin: 0 auto 0 4px; }
    .brand { font-size: 16px; font-weight: 700; color: #0f918c; margin-right: 82px; }
    .bubble { position: absolute; top: -26px; right: 40px; width: 60px; height: 60px; border-radius: 50%; border: 3px solid #f4f7fb; background: linear-gradient(160deg, #7db4f4 40%, #3f87f0 75%, #8cc4fb 86%, #4b90ee); box-shadow: 0 1px 3px #8899aa; color: #fff; font-size: 16px; line-height: 20px; padding-top: 16px; text-align: center; }
    .menus { flex: none; height: 56px; background: #56a0b8; display: flex; padding-left: 3px; }
    .grip { flex: none; width: 3px; margin: 3px 0 2px; background: repeating-linear-gradient(#b9b9b9 0 2px, transparent 2px 4px); }
    .menus .grip { background: repeating-linear-gradient(#e4f0f4 0 2px, transparent 2px 4px); }
    .menus nav { display: flex; flex-wrap: wrap; align-content: flex-start; column-gap: 15px; padding: 2px 0 2px 8px; flex: 1; }
    .menus button { height: 26px; color: #14262d; }
    .menus .wide { margin-left: 8px; }
    .bar { flex: none; display: flex; align-items: stretch; height: 34px; }
    .group { display: flex; align-items: stretch; padding-left: 3px; border: 1px solid #e4e4e4; border-left: 0; border-top: 0; }
    .tool { width: 31px; }
    .drop { width: 16px; }
    .low { width: 20px; padding-top: 10px; }
    .features .drop { width: 15px; }
    .features .low { width: 20px; }
    .sep { flex: none; width: 1px; margin: 3px 2px; background: #d6d6d6; }
    .standard { height: 36px; }
    .start { gap: 3px; width: 76px; padding-left: 11px; }
    .start .icon { margin: 0 -3px 0 -4px; }
    .start span { margin: 0 -6px 0 3px; }
    .search { display: flex; width: 157px; height: 24px; border: 1px solid #a4a4a4; align-self: center; margin-left: 5px; }
    .search input { flex: 1; min-width: 0; padding-left: 2px; }
    .standard .low { width: 23px; }
    .selection { height: 36px; align-items: center; padding: 0 3px 0 5px; border-bottom: 1px solid #8b8f92; }
    .pick { display: grid; width: 166px; height: 24px; border: 1px solid #a4a4a4; margin-right: 8px; flex: none; }
    .pick.big { width: 175px; margin-right: 5px; }
    .pick select { appearance: none; grid-area: 1 / 1; padding-left: 2px; }
    .pick .icon { grid-area: 1 / 1; justify-self: end; align-self: center; pointer-events: none; margin-right: -2px; }
    .selection .tool { width: 23px; height: 28px; }
    .selection .drop { width: 14px; }
    .selection .sep { height: 28px; }
    .selection .low { margin-left: auto; }
    .main { flex: 1; min-height: 0; display: flex; }
    .rail { flex: none; width: 32px; background: #dadada; border-right: 1px solid #a3a3a3; display: flex; flex-direction: column; }
    .rail button { height: 41px; padding-left: 3px; }
    .rail .gear { height: 26px; margin-bottom: 17px; padding: 0; }
    .rail .on { height: 45px; background: #fff; border: 1px solid #a3a3a3; border-right: 0; margin: 0 -1px 0 2px; padding: 0; }
    .rail .tall { height: 54px; }
    .rail .books { margin-bottom: 6px; }
    .rail .last { height: 24px; }
    .rail .tiny { height: 15px; padding: 0; }
    .panel { flex: none; width: 52px; background: #fff; border-right: 1px solid #8fa0a4; display: flex; flex-direction: column; padding: 0 9px 5px 6px; }
    .caption { height: 32px; display: flex; gap: 8px; align-items: center; padding-left: 4px; }
    .dots { width: 2px; height: 11px; background: repeating-linear-gradient(#555 0 2px, #fff 2px 4px); }
    .max { width: 15px; height: 13px; border: 1px solid #222; border-top-width: 2px; }
    .tree { flex: 1; min-height: 0; border: 1px solid #d5d5d5; border-bottom: 0; display: flex; flex-direction: column; }
    .tree h2 { margin: 0; height: 24px; padding-left: 7px; font-size: 14px; line-height: 24px; font-weight: 400; overflow: hidden; white-space: nowrap; background: #f0f0f0; border-bottom: 1px solid #d5d5d5; }
    .body { flex: 1; min-height: 0; display: flex; }
    .rows { flex: 1; min-width: 0; overflow: hidden; margin: 0; padding: 0; list-style: none; background: repeating-linear-gradient(#fff 0 23px, #e9e9e9 23px 24px, #f7f7f7 24px 47px, #e9e9e9 47px 48px); }
    .rows li { height: 24px; display: flex; align-items: center; padding-left: 4px; }
    .rows span { flex: none; width: 10px; height: 10px; border: 1px solid #bbb; background: #fff; font: 13px/8px "Liberation Sans", sans-serif; text-align: center; }
    .vbar { flex: none; width: 20px; background: #f0f0f0; display: flex; flex-direction: column; }
    .vbar button { height: 20px; width: 20px; }
    .track { flex: 1; }
    .thumb { height: 78%; background: #cdcdcd; }
    .hbar { height: 22px; background: #f0f0f0; font-size: 10px; line-height: 18px; padding-left: 3px; color: #555; overflow: hidden; white-space: nowrap; }
    .foot { height: 6px; background: #d8d8d8; border: 1px solid #a5a5a5; }
    .stage { flex: 1; min-width: 0; display: flex; flex-direction: column; border-bottom: 1px solid #d8d8d8; }
    .tabs { flex: none; height: 26px; display: flex; border-bottom: 2px solid #56a0b8; font-family: "Noto Sans", "Noto Sans CJK SC", sans-serif; font-size: 15px; }
    .tab { display: flex; align-items: center; min-width: 153px; padding: 0 19px 0 2px; white-space: nowrap; height: 24px; }
    .tab .icon + span + .icon { margin-left: -2px; margin-right: -2px; }
    .tab.on { background: #56a0b8; color: #fff; padding-right: 4px; }
    .tab button { width: 11px; height: 20px; }
    .tab span { line-height: 24px; }
    .finish { color: #b4b4b4; padding-right: 3px; align-self: center; }
    .second { padding-left: 2px; }
    .second .grip { margin-right: 2px; }
    .status { flex: none; height: 23px; border-top: 1px solid #9c9c9c; display: flex; align-items: center; padding: 0 52px 0 4px; font-weight: 700; font-size: 14px; }
    .status p { margin: 0 auto 0 0; }
    .status button { width: 20px; height: 20px; }
    .taskbar { flex: none; height: 50px; background: #1f2e35; color: #fff; display: flex; }
    .taskbar button { height: 50px; }
    .win { width: 64px; }
    .taskbar .win { padding-right: 4px; }
    .app { width: 47px; border-bottom: 3px solid transparent; background: linear-gradient(#76b9ed, #76b9ed) center bottom / 38px 3px no-repeat border-box; }
    .app.on { background: linear-gradient(#76b9ed, #76b9ed) center bottom / 47px 3px no-repeat border-box, #535f66; }
    .tscroll { width: 21px; margin: 0 5px; background: #f0f0f0; display: flex; flex-direction: column; flex: none; }
    .tscroll button { height: 25px; }
    .ime { display: flex; margin-right: auto; }
    .ime button { width: 25px; font-size: 19px; padding-bottom: 2px; }
    .ime b { font-size: 16px; line-height: 18px; width: 18px; height: 18px; background: #fff; color: #111; font-weight: 400; }
    .tray { display: flex; }
    .tray button { width: 30px; }
    .clock { font-size: 16px; line-height: 23px; text-align: center; padding: 2px 0; width: 94px; }
    .taskbar .news { width: 54px; position: relative; }
    .badge { position: absolute; left: 28px; top: 24px; width: 16px; height: 16px; border-radius: 2px; background: #dc0b0b; font-size: 12px; line-height: 16px; }
    .taskbar .notice { width: 44px; }
    .desk { width: 6px; margin-left: 12px; border-left: 1px solid #87949a; }
  `];

  private tab(name: string, kind: string, on = false) {
    return html`<div class=${classMap({ tab: true, on })} role="tab" aria-selected=${on}>
      ${icon(kind)}<span>${name}</span>${icon("mark")}
      ${on ? html`<button aria-label="关闭">${icon("close")}</button>` : ""}
    </div>`;
  }

  render(): TemplateResult {
    return html`
      <header class="title">
        <span class="logo">NX</span>
        <h1>NX 12.0.0.27 - 建模</h1>
        <span class="brand">SIEMENS</span>
        <button class="x" aria-label="关闭">${icon("winClose")}</button>
      </header>
      <div class="bubble">00:00</div>
      <div class="menus"><span class="grip"></span>
        <nav>${menus.map(([t, k]) => html`<button class=${classMap({ wide: k === "P" })}>${t}${k ? html`(<u>${k}</u>)` : ""}</button>`)}</nav>
      </div>
      <div class="bar standard"><div class="group">
        <span class="grip"></span>
        <button class="start">${icon("globe")}<span>启动</span>${icon("caret")}</button>
        ${tools(standardA)}
        <div class="search"><input aria-label="查找命令" .value=${"查找命令"} /><button aria-label="查找">${icon("lens")}</button></div>
        ${tools(["_"])}
      </div></div>
      <div class="bar selection">
        <label class="pick"><select aria-label="类型过滤器" @change=${(e: Event) => (this.view = (e.target as HTMLSelectElement).value)}><option>${this.view}</option></select>${icon("caret")}</label>
        <label class="pick big"><select aria-label="选择范围"><option>整个装配</option></select>${icon("caret")}</label>
        ${tools(selection)}${tools(["_"])}
      </div>
      <div class="main">
        <div class="rail">
          <button class="gear" aria-label="选项">${icon("gear")}</button>
          <button aria-label="装配导航器">${icon("nav")}</button>
          <button aria-label="约束导航器">${icon("mirror")}</button>
          <button class="on" aria-label="部件导航器">${icon("feature")}</button>
          <button class="books" aria-label="重用库">${icon("books")}</button>
          <button class="tall" aria-label="信息">${icon("info")}</button>
          <button class="tall" aria-label="浏览器">${icon("web")}</button>
          <button class="tall" aria-label="历史">${icon("clock")}</button>
          <button class="last" aria-label="系统材料">${icon("rainbow")}</button>
          ${["topEnd", "prev", "caret", "bottomEnd"].map((n) => html`<button class="tiny" aria-label=${n}>${icon(n)}</button>`)}
        </div>
        <aside class="panel">
          <div class="caption"><span class="dots"></span><button class="max" aria-label="最大化"></button></div>
          <div class="tree">
            <h2>名称</h2>
            <div class="body">
              <ul class="rows"><li><span>+</span></li><li><span>+</span></li><li><span>−</span></li></ul>
              <div class="vbar"><button aria-label="向上">${icon("up")}</button><div class="track"><div class="thumb"></div></div><button aria-label="向下">${icon("down")}</button></div>
            </div>
            <div class="hbar">‹ :</div>
          </div>
          <div class="foot"></div>
        </aside>
        <section class="stage">
          <div class="tabs" role="tablist">
            ${this.tab("_model1.prt", "part")}${this.tab("_model2.prt", "part", true)}
            ${this.tab("确定最短刀长的教学案例.prt", "drill")}${this.tab("面铣教学案例.prt", "drill")}
          </div>
          <model-view></model-view>
        </section>
      </div>
      <div class="bar features"><div class="group"><span class="grip"></span>${tools(features)}</div></div>
      <div class="bar">
        <div class="group"><span class="grip"></span>${tools(assembly)}</div>
        <div class="group second"><span class="grip"></span>${tools(["sketch", "finish"])}<span class="finish">完成草图</span>${tools(sketchTools)}</div>
      </div>
      <div class="status"><p>选择对象并使用 MB3，或者双击某一对象</p>
        <button aria-label="完成">${icon("flagBox")}</button><button aria-label="全屏">${icon("screen")}</button></div>
      <footer class="taskbar">
        <button class="win" aria-label="开始">${icon("windows")}</button>
        ${["cad", "bigBall", "nx", "folder", "picture", "settings"].map((n) => html`<button class=${classMap({ app: true, on: n === "nx" })} aria-label=${n}>${icon(n)}</button>`)}
        <div class="tscroll"><button aria-label="向上">${icon("up")}</button><button aria-label="向下">${icon("down")}</button></div>
        <div class="ime"><button><b>拼</b></button><button>中</button><button aria-label="半角">${icon("moon")}</button><button aria-label="标点">${icon("punct")}</button><button>简</button><button aria-label="输入法设置">${icon("imeGear")}</button></div>
        <div class="tray">${["flower", "wechat", "smallBall", "usb", "redDots", "orange", "mic", "wifi", "volume"].map((n) => html`<button aria-label=${n}>${icon(n)}</button>`)}</div>
        <div class="clock">18:49:37<br />2021/9/18</div>
        <button class="news" aria-label="资讯">${icon("news")}<span class="badge">1</span></button>
        <button class="notice" aria-label="通知">${icon("notice")}</button>
        <span class="desk"></span>
      </footer>`;
  }
}
